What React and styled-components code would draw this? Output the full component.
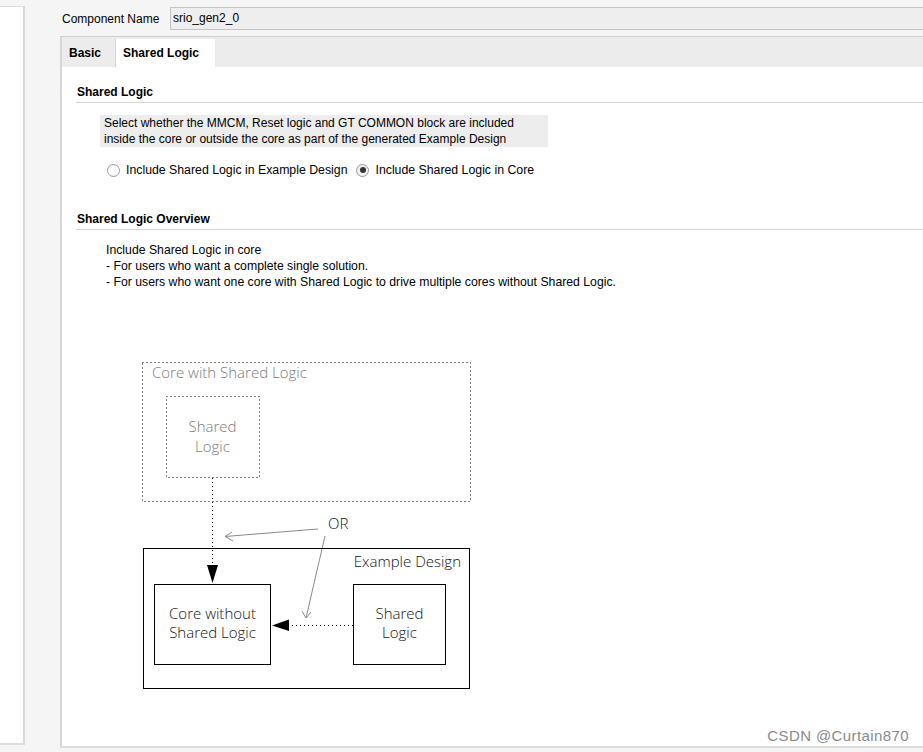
import React from "react";
import styled, { createGlobalStyle } from "styled-components";

const GlobalStyle = createGlobalStyle`
  html, body {
    margin: 0;
    padding: 0;
    background: #f5f5f5;
    font-family: "Liberation Sans", Arial, sans-serif;
    font-size: 12px;
    color: #000;
  }
`;

const Page = styled.div`
  position: relative;
  display: flex;
  height: 752px;
  overflow: hidden;
`;

const LeftPanel = styled.div`
  flex: 0 0 25px;
  margin-top: 6px;
  height: 739px;
  background: #fff;
  border-top: 1px solid #dcdcdc;
  border-right: 2px solid #d9d9d9;
  border-bottom: 2px solid #dedede;
  box-sizing: border-box;
`;

const Main = styled.div`
  flex: 1;
  margin-left: 35px;
  padding-top: 7px;
  display: flex;
  flex-direction: column;
  min-width: 0;
`;

const NameRow = styled.div`
  display: flex;
  align-items: center;
  height: 23px;
`;

const NameLabel = styled.span`
  padding-left: 2px;
  width: 108px;
`;

const NameField = styled.div`
  flex: 1;
  height: 23px;
  box-sizing: border-box;
  border: 1px solid #c4c4c4;
  border-right: none;
  background: #eeeeee;
  padding-left: 2px;
  line-height: 21px;
`;

const TabPanel = styled.div`
  margin-top: 6px;
  height: 712px;
  box-sizing: border-box;
  background: #fff;
  border-top: 1px solid #cfcfcf;
  border-left: 2px solid #d6d6d6;
  border-bottom: 2px solid #dcdcdc;
  display: flex;
  flex-direction: column;
`;

const TabStrip = styled.div`
  height: 30px;
  flex: 0 0 30px;
  background: #ececec;
  display: flex;
  align-items: flex-end;
`;

const Tab = styled.div`
  height: ${(p) => (p.$active ? "28px" : "30px")};
  box-sizing: border-box;
  padding: ${(p) => (p.$active ? "0 16px 0 7px" : "2px 14px 0 7px")};
  background: ${(p) => (p.$active ? "#fff" : "transparent")};
  border-left: ${(p) => (p.$active ? "1px solid #d4d4d4" : "none")};
  font-weight: bold;
  display: flex;
  align-items: center;
`;

const Content = styled.div`
  flex: 1;
  padding: 17px 0 0 14px;
`;

const Heading = styled.div`
  font-weight: bold;
  line-height: 16px;
  padding: 0 0 2px 1px;
  border-bottom: 1px solid #d3d3d3;
  margin-top: ${(p) => p.$top || 0}px;
`;

const Note = styled.div`
  margin: 12px 0 0 24px;
  width: 448px;
  box-sizing: border-box;
  padding: 0 4px;
  background: #ededed;
  line-height: 16px;
`;

const RadioRow = styled.div`
  display: flex;
  align-items: center;
  gap: 9px;
  margin: 15px 0 0 31px;
  line-height: 16px;
  font-size: 12.3px;
`;

const RadioOption = styled.label`
  display: flex;
  align-items: center;
  gap: 6px;
`;

const RadioCircle = styled.span`
  width: 13px;
  height: 13px;
  box-sizing: border-box;
  border-radius: 50%;
  border: 1px solid #9a9a9a;
  background: ${(p) => (p.$checked ? "#f0f0f0" : "#fff")};
  display: flex;
  align-items: center;
  justify-content: center;

  &::after {
    content: "";
    display: ${(p) => (p.$checked ? "block" : "none")};
    width: 6px;
    height: 6px;
    border-radius: 50%;
    background: #333;
  }
`;

const Overview = styled.div`
  margin: 12px 0 0 30px;
  line-height: 16px;
  font-size: 12.25px;
`;

const Diagram = styled.svg`
  display: block;
  margin: 65px 0 0 64px;
  font-family: "Open Sans", "DejaVu Sans", sans-serif;
  font-weight: 300;
`;

const Watermark = styled.div`
  position: absolute;
  right: 14px;
  bottom: 8px;
  font-size: 15px;
  letter-spacing: 0.4px;
  color: #8a8a8a;
  font-family: "Liberation Sans", Arial, sans-serif;
`;

function Radio({ checked, children }) {
  return (
    <RadioOption>
      <RadioCircle $checked={checked} />
      {children}
    </RadioOption>
  );
}

function SharedLogicDiagram() {
  const dot = { stroke: "#000", strokeWidth: 1, strokeDasharray: "1 3", fill: "none" };
  const grey = { fill: "#7a7a7a", fontSize: 15 };
  const dark = { fill: "#111", fontSize: 15 };
  return (
    <Diagram width="340" height="340" viewBox="140 355 340 340">
      <rect x="142.5" y="362.5" width="328" height="139" {...dot} />
      <text x="152" y="378" {...grey}>Core with Shared Logic</text>
      <rect x="166.5" y="396.5" width="93" height="81" {...dot} />
      <text x="212.5" y="432" textAnchor="middle" {...grey}>Shared</text>
      <text x="212.5" y="452" textAnchor="middle" {...grey}>Logic</text>
      <line x1="212.5" y1="478" x2="212.5" y2="566" {...dot} />
      <polygon points="207,565 218,565 212.5,583" fill="#000" />

      <text x="328" y="529" {...dark}>OR</text>
      <g stroke="#8a8a8a" strokeWidth="1" fill="none">
        <line x1="318" y1="529" x2="225" y2="536.5" />
        <polyline points="232,532 225,536.5 233,541" />
        <line x1="325" y1="536" x2="306" y2="618" />
        <polyline points="302,611 306,618 311,612" />
      </g>

      <rect x="143.5" y="548.5" width="326" height="140" fill="none" stroke="#000" />
      <text x="461" y="567" textAnchor="end" {...dark}>Example Design</text>

      <rect x="154.5" y="584.5" width="116" height="80" fill="none" stroke="#000" />
      <text x="212.5" y="619" textAnchor="middle" {...dark}>Core without</text>
      <text x="212.5" y="638" textAnchor="middle" {...dark}>Shared Logic</text>

      <rect x="353.5" y="584.5" width="92" height="80" fill="none" stroke="#000" />
      <text x="399.5" y="619" textAnchor="middle" {...dark}>Shared</text>
      <text x="399.5" y="638" textAnchor="middle" {...dark}>Logic</text>

      <line x1="353" y1="625.5" x2="288" y2="625.5" {...dot} />
      <polygon points="289,619.5 289,631 272,625.5" fill="#000" />
    </Diagram>
  );
}

export default function App() {
  return (
    <Page>
      <GlobalStyle />
      <LeftPanel />
      <Main>
        <NameRow>
          <NameLabel>Component Name</NameLabel>
          <NameField>srio_gen2_0</NameField>
        </NameRow>
        <TabPanel>
          <TabStrip>
            <Tab>Basic</Tab>
            <Tab $active>Shared Logic</Tab>
          </TabStrip>
          <Content>
            <Heading>Shared Logic</Heading>
            <Note>
              Select whether the MMCM, Reset logic and GT COMMON block are included
              <br />
              inside the core or outside the core as part of the generated Example Design
            </Note>
            <RadioRow>
              <Radio>Include Shared Logic in Example Design</Radio>
              <Radio checked>Include Shared Logic in Core</Radio>
            </RadioRow>

            <Heading $top={33}>Shared Logic Overview</Heading>
            <Overview>
              Include Shared Logic in core
              <br />- For users who want a complete single solution.
              <br />- For users who want one core with Shared Logic to drive multiple cores without Shared Logic.
            </Overview>

            <SharedLogicDiagram />
          </Content>
        </TabPanel>
      </Main>
      <Watermark>CSDN @Curtain870</Watermark>
    </Page>
  );
}
